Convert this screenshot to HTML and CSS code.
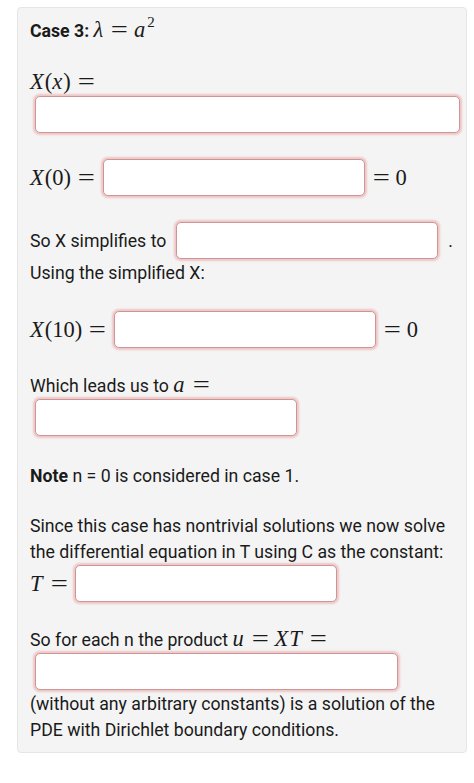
FILE: index.html
```html
<!DOCTYPE html>
<html lang="en">
<head>
<meta charset="utf-8">
<title>Case 3</title>
<link rel="stylesheet" href="styles.css">
</head>
<body>
<div class="panel">
  <div class="line"><b>Case 3:</b> <span class="m"><i>λ</i><span class="rel">=</span><i>a</i><sup>2</sup></span></div>

  <div class="line mt26"><span class="m"><i>X</i>(<i>x</i>)<span class="rel">=</span></span></div>
  <div class="box full"></div>

  <div class="row mt26">
    <span class="m"><i>X</i>(0)<span class="rel">=</span></span>
    <div class="box w262 ml1"></div>
    <span class="m after"><span class="rel first">=</span>0</span>
  </div>

  <div class="row mt26">
    <span class="txt">So X simplifies to</span>
    <div class="box w262 ml10"></div>
    <span class="txt dot">.</span>
  </div>
  <div class="line mt1">Using the simplified X:</div>

  <div class="row mt25">
    <span class="m"><i>X</i>(10)<span class="rel">=</span></span>
    <div class="box w262 ml1"></div>
    <span class="m after"><span class="rel first">=</span>0</span>
  </div>

  <div class="line mt25">Which leads us to <span class="m"><i>a</i><span class="rel">=</span></span></div>
  <div class="box w262 ml5"></div>

  <div class="line mt27"><b>Note</b> n = 0 is considered in case 1.</div>

  <div class="para mt24">Since this case has nontrivial solutions we now solve the differential equation in T using C as the constant:</div>
  <div class="row">
    <span class="m"><i>T</i><span class="rel">=</span></span>
    <div class="box w262 ml4"></div>
  </div>

  <div class="line mt25">So for each n the product <span class="m"><i>u</i><span class="rel">=</span><i>X</i><i>T</i><span class="rel">=</span></span></div>
  <div class="box w363 ml5"></div>

  <div class="para mt1">(without any arbitrary constants) is a solution of the PDE with Dirichlet boundary conditions.</div>
</div>
</body>
</html>
```

FILE: styles.css
```css
html, body {
  margin: 0;
  padding: 0;
  background: #ffffff;
}

body {
  font-family: Roboto, "Noto Sans", "Liberation Sans", sans-serif;
  font-size: 17.7px;
  color: #1a1a1a;
}

.panel {
  margin: 7px 7px 0 17px;
  box-sizing: border-box;
  height: 746px;
  background: #f4f4f4;
  border: 1px solid #e6e6e6;
  border-radius: 4px;
  padding: 10px 12px 9px 12px;
}

.line, .para {
  line-height: 26px;
  height: 26px;
  white-space: nowrap;
}

.para {
  height: auto;
  white-space: normal;
}

b {
  font-weight: 700;
}

.m {
  font-family: "Liberation Serif", "DejaVu Serif", serif;
  font-size: 22.5px;
  line-height: 0;
  color: #1a1a1a;
}

.m i {
  font-style: italic;
  padding-right: 1px;
}

.m sup {
  font-size: 15px;
  line-height: 0;
  vertical-align: 10px;
  margin-left: 1px;
}

.rel {
  display: inline-block;
  transform: scaleX(1.35);
  margin: 0 8px 0 9px;
}

.rel.first {
  margin-left: 2px;
}

.row {
  display: flex;
  align-items: center;
  height: 37px;
}

.txt {
  line-height: 26px;
}

.box {
  box-sizing: border-box;
  height: 37px;
  background: #ffffff;
  border: 1.5px solid #cd9696;
  border-radius: 5px;
  box-shadow: 0 0 2px 1.5px #f0c6c6;
  flex: none;
}

.full {
  width: 425px;
  margin-left: 5px;
}

.w262 { width: 262px; }
.w363 { width: 363px; }

.ml1 { margin-left: 2px; }
.ml4 { margin-left: 2px; }
.ml5 { margin-left: 5px; }
.ml10 { margin-left: 10px; }

.after {
  margin-left: 8px;
}

.dot {
  margin-left: 10px;
}

.mt1 { margin-top: 1px; }
.mt24 { margin-top: 24px; }
.mt25 { margin-top: 25px; }
.mt26 { margin-top: 26px; }
.mt27 { margin-top: 27px; }
```
